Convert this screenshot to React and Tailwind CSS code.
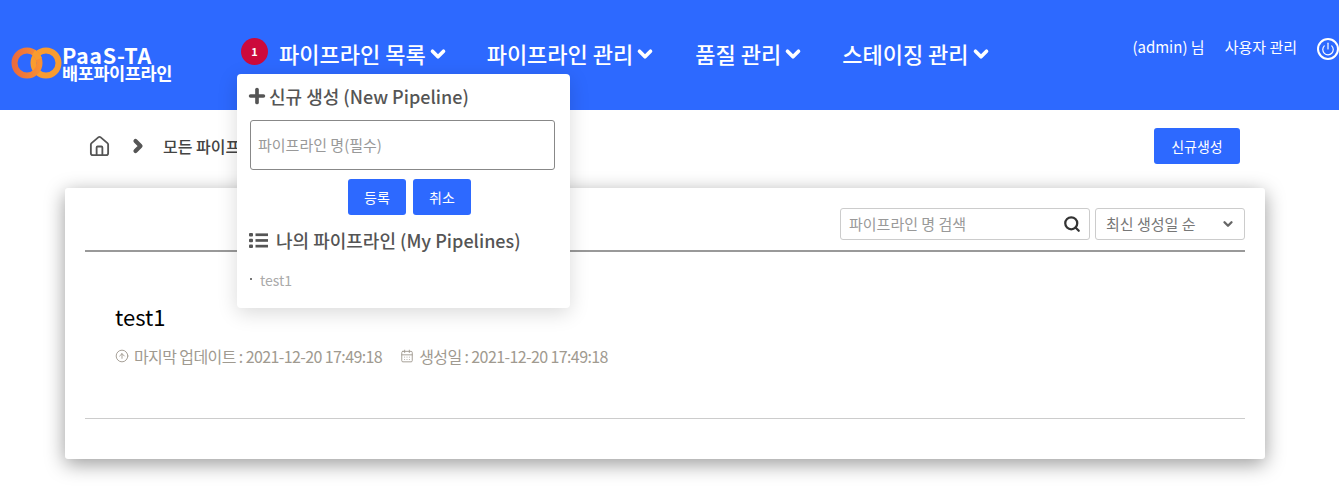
import React from "react";
import { House, ChevronRight, ChevronDown, Plus, Search, CircleArrowUp, CalendarDays, Power } from "lucide-react";

const Nav = ({ children, w }) => (
  <div className={`flex items-center gap-[1px] text-[22px] font-medium text-white leading-none ${w}`}>
    <span className="mt-[3px]">{children}</span>
    <ChevronDown size={22} strokeWidth={4} className="mt-[4px] -mr-[3px]" />
  </div>
);

function Logo() {
  return (
    <svg width="54" height="34" viewBox="0 0 54 34" className="shrink-0">
      <defs>
        <linearGradient id="g" x1="0" y1="0" x2="1" y2="0">
          <stop offset="0" stopColor="#ec6c3c" />
          <stop offset="1" stopColor="#f98f33" />
        </linearGradient>
      </defs>
      <circle cx="36" cy="17" r="12.5" fill="none" stroke="#f99c2f" strokeWidth="6" />
      <circle cx="17" cy="17" r="12.5" fill="none" stroke="url(#g)" strokeWidth="6" />
      <path d="M23.5 6.5 A12.5 12.5 0 0 1 29 13" fill="none" stroke="#f99c2f" strokeWidth="6" />
    </svg>
  );
}

function ListGlyph() {
  return (
    <svg width="19" height="15" viewBox="0 0 19 15" className="shrink-0 text-[#555]" fill="currentColor">
      <rect x="0" y="0" width="4" height="3.5" rx="1" />
      <rect x="0" y="5.7" width="4" height="3.5" rx="1" />
      <rect x="0" y="11.4" width="4" height="3.5" rx="1" />
      <rect x="6.5" y="0.4" width="12.5" height="2.7" />
      <rect x="6.5" y="6.1" width="12.5" height="2.7" />
      <rect x="6.5" y="11.8" width="12.5" height="2.7" />
    </svg>
  );
}

export default function App() {
  return (
    <div className="relative w-[1339px] h-[490px] overflow-hidden bg-white font-['Noto_Sans_CJK_KR','Noto_Sans',sans-serif]">
      <header className="h-[110px] bg-[#2d69ff] flex items-start">
        <div className="flex items-center w-[241px] pl-[10px] pt-[44px]">
          <Logo />
          <div className="text-white font-bold leading-none -ml-[2px] pt-[1px]">
            <div className="text-[21.5px] h-[19px] leading-[20px] tracking-[0.6px]">PaaS-TA</div>
            <div className="text-[17.5px] h-[18px] leading-[18px] tracking-[-0.4px]">배포파이프라인</div>
          </div>
        </div>
        <div className="flex items-center pt-[38px]">
          <div className="w-[27px] h-[27px] rounded-full bg-[#cc0a3c] text-white text-[11px] font-bold flex items-center justify-center mr-[11px]">1</div>
          <Nav w="mr-[41px]">파이프라인 목록</Nav>
          <Nav w="mr-[42px]">파이프라인 관리</Nav>
          <Nav w="mr-[41px]">품질 관리</Nav>
          <Nav>스테이징 관리</Nav>
        </div>
        <div className="ml-auto flex items-start text-white text-[15px] pt-[37px] leading-[20px]">
          <span className="mr-[20px]">(admin) 님</span>
          <span className="mr-[20px]">사용자 관리</span>
          <div className="w-[22px] h-[22px] mt-[1px] rounded-full border-2 border-white flex items-center justify-center">
            <Power size={14} strokeWidth={2} />
          </div>
        </div>
      </header>

      <div className="flex items-center h-[36px] mt-[18px] pl-[88px] pr-[99px]">
        <House size={23} strokeWidth={1.9} className="text-[#555]" />
        <ChevronRight size={20} strokeWidth={5} className="text-[#555] ml-[17px]" />
        <span className="ml-[15px] text-[16px] font-medium text-[#444]">모든 파이프라인</span>
        <button className="ml-auto w-[86px] h-[36px] bg-[#2d69ff] text-white text-[14px] rounded-[3px]">신규생성</button>
      </div>

      <main className="w-[1200px] h-[271px] ml-[65px] mt-[24px] bg-white rounded-[3px] shadow-[0_5px_20px_rgba(0,0,0,0.4)] px-[20px] pt-[20px]">
        <div className="flex justify-end gap-[5px] h-[44px] border-b-2 border-[#999]">
          <div className="w-[250px] h-[32px] border border-[#ccc] rounded-[3px] flex items-center pl-[8px] pr-[8px] text-[15px] text-[#999]">
            <span className="flex-1">파이프라인 명 검색</span>
            <Search size={18} strokeWidth={3} className="text-[#333]" />
          </div>
          <div className="w-[150px] h-[32px] border border-[#ccc] rounded-[3px] flex items-center pl-[10px] pr-[9px] text-[15px] text-[#777]">
            <span className="flex-1">최신 생성일 순</span>
            <ChevronDown size={14} strokeWidth={4} className="text-[#666]" />
          </div>
        </div>
        <div className="h-[167px] border-b border-[#ccc] pl-[30px] pt-[48px]">
          <div className="text-[22px] text-black leading-[32px]">test1</div>
          <div className="flex items-center mt-[13px] text-[16px] text-[#a09a90] tracking-[-0.6px] leading-[22px]">
            <CircleArrowUp size={14} strokeWidth={1.6} className="mr-[5px]" />
            <span>마지막 업데이트 : 2021-12-20 17:49:18</span>
            <CalendarDays size={14} strokeWidth={1.6} className="ml-[18px] mr-[5px]" />
            <span>생성일 : 2021-12-20 17:49:18</span>
          </div>
        </div>
      </main>

      <div className="absolute left-[237px] top-[74px] w-[333px] h-[234px] bg-white rounded-[4px] shadow-[0_5px_20px_rgba(0,0,0,0.15)] pl-[13px] pr-[15px]">
        <div className="flex items-center h-[44px] text-[18px] font-medium text-[#555] leading-none">
          <Plus size={22} strokeWidth={4} className="mr-[1px] -ml-[4px]" />
          <span>신규 생성 (New Pipeline)</span>
        </div>
        <div className="w-[305px] h-[50px] mt-[2px] border border-[#888] rounded-[3px] flex items-center pl-[7px] text-[15px] text-[#999]">파이프라인 명(필수)</div>
        <div className="flex justify-center gap-[7px] mt-[9px] pl-[14px]">
          <button className="w-[58px] h-[36px] bg-[#2d69ff] text-white text-[14px] rounded-[3px]">등록</button>
          <button className="w-[58px] h-[36px] bg-[#2d69ff] text-white text-[14px] rounded-[3px]">취소</button>
        </div>
        <div className="flex items-center h-[26px] mt-[12px] text-[18px] font-medium text-[#555] leading-none -ml-[1px]">
          <ListGlyph />
          <span className="ml-[8px]">나의 파이프라인 (My Pipelines)</span>
        </div>
        <div className="flex items-center mt-[14px] text-[14px] text-[#aaa] leading-[26px]">
          <span className="w-[2px] h-[2px] bg-[#777] mr-[8px] -mt-[3px]" />
          <span>test1</span>
        </div>
      </div>
    </div>
  );
}
